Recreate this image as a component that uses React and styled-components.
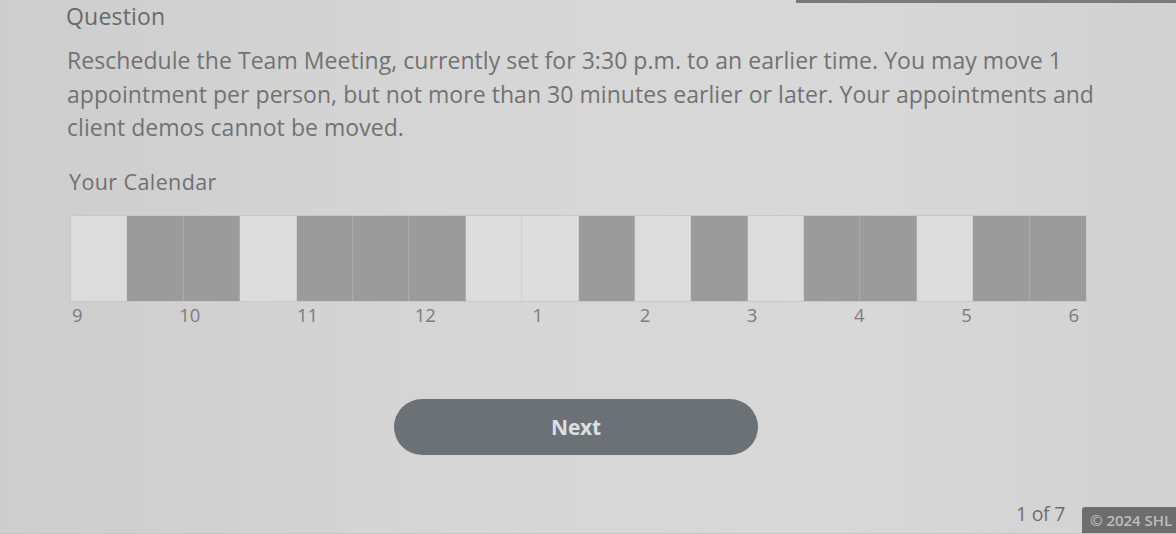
import styled, { createGlobalStyle } from 'styled-components'

const GlobalStyle = createGlobalStyle`
    html, body {
        margin: 0;
        padding: 0;
        height: 100%;
    }
    body {
        font-family: 'Open Sans', 'Liberation Sans', sans-serif;
        background: linear-gradient(90deg, #cdcdcd 0%, #d6d6d6 40%, #d8d8d8 70%, #d2d2d2 100%);
        color: #747474;
        overflow: hidden;
    }
`

const Page = styled.div`
    position: relative;
    width: 1176px;
    height: 534px;
    display: flex;
    flex-direction: column;
`

const TopEdge = styled.div`
    position: absolute;
    top: 0;
    right: 0;
    width: 380px;
    height: 3px;
    background: #7a7a7a;
`

const Content = styled.main`
    padding: 0 90px 0 66px;
    flex: 1;
`

const Heading = styled.h2`
    margin: 1px 0 0;
    font-size: 23px;
    line-height: 30px;
    font-weight: 500;
    color: #6a6a6a;
    letter-spacing: 0.2px;
`

const Prompt = styled.p`
    margin: 13px 0 0 1px;
    font-size: 23px;
    line-height: 33.5px;
    letter-spacing: 0.05px;
    color: #727272;
    white-space: nowrap;
`

const SectionLabel = styled.h3`
    margin: 23px 0 0 3px;
    font-size: 21.5px;
    line-height: 28px;
    font-weight: 500;
    letter-spacing: 0.4px;
    color: #707070;
`

const Calendar = styled.div`
    margin: 19px 0 0 4px;
    width: 1017px;
`

const Bar = styled.div`
    display: grid;
    grid-template-columns: repeat(18, 1fr);
    height: 85px;
    border: 1px solid #c8c8c8;
`

const Slot = styled.div`
    background: ${({ busy }) => (busy ? '#9b9b9b' : '#dcdcdc')};
    border-right: 1px solid ${({ busy }) => (busy ? '#acacac' : '#d0d0d0')};
    &:last-child {
        border-right: none;
    }
`

const Hours = styled.div`
    display: flex;
    justify-content: space-between;
    padding: 0 8px 0 2px;
    margin-top: 3px;
    font-size: 18.5px;
    line-height: 19px;
    color: #7c7c7c;
`

const Actions = styled.div`
    display: flex;
    justify-content: center;
    margin-top: 75px;
`

const NextButton = styled.button`
    width: 364px;
    height: 56px;
    border: none;
    border-radius: 28px;
    background: #6c7176;
    color: #dcdfe2;
    font-family: 'Open Sans', 'Liberation Sans', sans-serif;
    font-size: 21px;
    font-weight: 700;
    letter-spacing: -0.2px;
    cursor: pointer;
`

const Footer = styled.footer`
    display: flex;
    justify-content: flex-end;
    align-items: flex-end;
    height: 30px;
    border-bottom: 1px solid #c6c6c6;
`

const PageCount = styled.span`
    font-size: 19.5px;
    color: #6e6e6e;
    margin: 0 17px 6px 0;
    letter-spacing: -0.3px;
`

const Copyright = styled.div`
    width: 86px;
    height: 26px;
    background: #6d6d6d;
    color: #bdbdbd;
    font-size: 15px;
    font-weight: 600;
    padding-left: 8px;
    display: flex;
    align-items: center;
    white-space: nowrap;
    border-radius: 3px 0 0 0;
`

const slots = [0, 1, 1, 0, 1, 1, 1, 0, 0, 1, 0, 1, 0, 1, 1, 0, 1, 1]
const hours = [9, 10, 11, 12, 1, 2, 3, 4, 5, 6]

export default function App() {
    return (
        <>
            <GlobalStyle />
            <Page>
                <TopEdge />
                <Content>
                    <Heading>Question</Heading>
                    <Prompt>
                        Reschedule the Team Meeting, currently set for 3:30 p.m. to an earlier time. You may move 1
                        <br />
                        appointment per person, but not more than 30 minutes earlier or later. Your appointments and
                        <br />
                        client demos cannot be moved.
                    </Prompt>
                    <SectionLabel>Your Calendar</SectionLabel>
                    <Calendar>
                        <Bar>
                            {slots.map((busy, i) => (
                                <Slot key={i} busy={busy} />
                            ))}
                        </Bar>
                        <Hours>
                            {hours.map((h) => (
                                <span key={h}>{h}</span>
                            ))}
                        </Hours>
                    </Calendar>
                    <Actions>
                        <NextButton>Next</NextButton>
                    </Actions>
                </Content>
                <Footer>
                    <PageCount>1 of 7</PageCount>
                    <Copyright>© 2024 SHL</Copyright>
                </Footer>
            </Page>
        </>
    )
}
